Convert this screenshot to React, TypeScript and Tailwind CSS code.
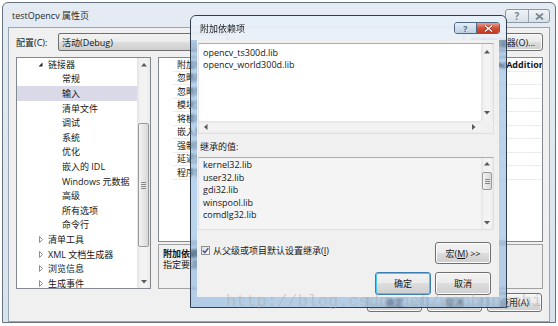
import React from "react";

const btn =
  "flex items-center justify-center rounded-[3px] border border-[#707070] bg-[linear-gradient(#f2f2f2_0%,#ebebeb_50%,#dddddd_50%,#cfcfcf_100%)] shadow-[inset_0_0_0_1px_#fbfbfb]";

function Arrow({ dir }: { dir: "up" | "down" | "left" | "right" }) {
  const d =
    dir === "up"
      ? "M0 3.5 L3 0 L6 3.5 Z"
      : dir === "down"
      ? "M0 0 L6 0 L3 3.5 Z"
      : dir === "left"
      ? "M3.5 0 L3.5 6 L0 3 Z"
      : "M0 0 L0 6 L3.5 3 Z";
  const vert = dir === "up" || dir === "down";
  return (
    <svg width={vert ? 6 : 4} height={vert ? 4 : 6} viewBox={vert ? "0 0 6 4" : "0 0 4 6"}>
      <path d={d} fill="#5a5a5a" />
    </svg>
  );
}

const tree = [
  { t: "链接器", l: 1, exp: true },
  { t: "常规", l: 2 },
  { t: "输入", l: 2, sel: true },
  { t: "清单文件", l: 2 },
  { t: "调试", l: 2 },
  { t: "系统", l: 2 },
  { t: "优化", l: 2 },
  { t: "嵌入的 IDL", l: 2 },
  { t: "Windows 元数据", l: 2 },
  { t: "高级", l: 2 },
  { t: "所有选项", l: 2 },
  { t: "命令行", l: 2 },
  { t: "清单工具", l: 1, exp: false },
  { t: "XML 文档生成器", l: 1, exp: false },
  { t: "浏览信息", l: 1, exp: false },
  { t: "生成事件", l: 1, exp: false },
];

const props = [
  "附加依赖项",
  "忽略所有默认库",
  "忽略特定默认库",
  "模块定义文件",
  "将模块添加到程序集",
  "嵌入托管资源文件",
  "强制符号引用",
  "延迟加载的 DLL",
  "程序集链接资源",
];

const inherited = ["kernel32.lib", "user32.lib", "gdi32.lib", "winspool.lib", "comdlg32.lib"];

export default function App() {
  return (
    <div className="relative h-[326px] w-[558px] overflow-hidden bg-white font-['Open_Sans','Noto_Sans_CJK_SC',sans-serif] text-[9px] leading-none text-[#161616]">
      <div className="pl-[2px] pt-[2px]">
        {/* Outer window */}
        <div className="relative flex h-[321px] w-[554px] flex-col rounded-t-[6px] border border-[#66727e] bg-[linear-gradient(#e4ebf2,#d9e3ed)]">
          <div className="flex h-[24px] items-center pl-[9px] text-[#2a2a2a]">testOpencv 属性页</div>
          {/* caption buttons (inactive) */}
          <div className="absolute right-[5px] top-[6px] flex h-[14px] overflow-hidden rounded-[3px] border border-[#8a97a6] bg-[linear-gradient(#f1f4f7,#d8e0e8)]">
            <div className="flex w-[23px] items-center justify-center border-r border-[#9aa6b3] text-[10px] font-bold text-[#7b8794]">?</div>
            <div className="flex w-[20px] items-center justify-center">
              <svg width="9" height="7" viewBox="0 0 9 7">
                <path d="M1 0.5 L8 6.5 M8 0.5 L1 6.5" stroke="#7b8794" strokeWidth="1.8" />
              </svg>
            </div>
          </div>

          {/* client */}
          <div className="mx-[5px] flex flex-1 flex-col border border-[#98a6b4] bg-[#f0f0f0]">
            {/* config row */}
            <div className="mt-[5px] flex h-[18px] items-center pl-[7px] pr-[6px]">
              <div className="w-[42px]">配置(C):</div>
              <div className="flex h-[18px] w-[170px] items-center rounded-[2px] border border-[#707070] bg-[linear-gradient(#f2f2f2_0%,#ebebeb_50%,#dddddd_50%,#cfcfcf_100%)] pl-[3px]">
                活动(Debug)
              </div>
              <div className={`${btn} ml-auto h-[18px] w-[80px]`}>配置管理器(O)...</div>
            </div>

            {/* main */}
            <div className="mt-[6px] flex h-[232px] gap-[7px] pl-[7px] pr-[6px]">
              {/* tree */}
              <div className="flex h-full w-[135px] shrink-0 border border-[#828790] bg-white">
                <div className="min-w-0 flex-1 overflow-hidden">
                  <div className="mt-[-1px]">
                    {tree.map((r, i) => (
                      <div
                        key={i}
                        className={`flex h-[14.6px] items-center whitespace-nowrap ${r.sel ? "bg-[#d9d9e7]" : ""} ${
                          r.l === 1 ? "pl-[21px]" : "pl-[45px]"
                        }`}
                      >
                        {r.l === 1 && (
                          <span className="mr-[5px] flex w-[5px] items-center justify-center">
                            {r.exp ? (
                              <svg width="5" height="5" viewBox="0 0 5 5">
                                <path d="M4.5 0.5 L4.5 4.5 L0.5 4.5 Z" fill="#262626" />
                              </svg>
                            ) : (
                              <svg width="4" height="7" viewBox="0 0 4 7">
                                <path d="M0.5 0.5 L3.5 3.5 L0.5 6.5 Z" fill="none" stroke="#808080" strokeWidth="0.9" />
                              </svg>
                            )}
                          </span>
                        )}
                        <span>{r.t}</span>
                      </div>
                    ))}
                  </div>
                </div>
                {/* scrollbar */}
                <div className="flex w-[13px] shrink-0 flex-col bg-[linear-gradient(90deg,#e3e3e3,#f2f2f2_25%,#f2f2f2_75%,#e8e8e8)]">
                  <div className="flex h-[13px] items-center justify-center">
                    <Arrow dir="up" />
                  </div>
                  <div className="flex-1">
                    <div className="mx-[1px] mt-[52px] flex h-[124px] items-center justify-center rounded-[2px] border border-[#9a9a9a] bg-[linear-gradient(90deg,#f4f4f4,#e6e6e6_50%,#d8d8d8)]">
                      <div className="flex flex-col gap-[1px]">
                        <div className="h-[1px] w-[5px] bg-[#8a8a8a]" />
                        <div className="h-[1px] w-[5px] bg-[#8a8a8a]" />
                        <div className="h-[1px] w-[5px] bg-[#8a8a8a]" />
                        <div className="h-[1px] w-[5px] bg-[#8a8a8a]" />
                      </div>
                    </div>
                  </div>
                  <div className="flex h-[13px] items-center justify-center">
                    <Arrow dir="down" />
                  </div>
                </div>
              </div>

              {/* right */}
              <div className="flex min-w-0 flex-1 flex-col gap-[2px]">
                <div className="h-[186px] overflow-hidden border border-[#828790] bg-white">
                  {props.map((p, i) => (
                    <div key={i} className="ml-[14px] flex h-[13.5px] items-center whitespace-nowrap border-b border-[#ececec]">
                      <div className="w-[322px] shrink-0 overflow-hidden pl-[4px]">{p}</div>
                      <div className="min-w-0 flex-1 overflow-hidden font-bold">
                        {i === 0 ? "%(AdditionalDependencies)" : ""}
                      </div>
                    </div>
                  ))}
                </div>
                <div className="h-[45px] overflow-hidden whitespace-nowrap border border-[#a0a0a0] bg-[#f0f0f0] pl-[4px] pt-[3px] leading-[11px]">
                  <div className="font-bold">附加依赖项</div>
                  <div>指定要添加到链接命令行的附加项。例如 kernel32.lib</div>
                </div>
              </div>
            </div>

            {/* bottom buttons */}
            <div className="mt-[4px] flex h-[19px] justify-end gap-[5px] pr-[7px]">
              <div className={`${btn} w-[55px]`}>确定</div>
              <div className={`${btn} w-[55px]`}>取消</div>
              <div className={`${btn} w-[55px]`}>应用(A)</div>
            </div>
          </div>
        </div>
      </div>

      {/* Modal dialog */}
      <div className="absolute left-[190px] top-[15px] flex h-[293px] w-[317px] flex-col rounded-t-[6px] border border-[#2f3d4c] bg-[rgba(120,170,220,0.5)] backdrop-blur-[1px]">
        <div className="relative flex h-[24px] items-center rounded-t-[5px] bg-[rgba(255,255,255,0.7)] pl-[9px] text-[#1a1a1a]">
          附加依赖项
          <div className="absolute right-[6px] top-[6px] flex h-[12px] overflow-hidden rounded-[3px] border border-[#4e6887]">
            <div className="flex w-[22px] items-center justify-center border-r border-[#4e6887] bg-[linear-gradient(#e6eef6,#bccfe2)] text-[9px] font-bold text-[#4f6a88]">
              ?
            </div>
            <div className="flex w-[22px] items-center justify-center bg-[linear-gradient(#eaa08e,#d2523a_50%,#c4391f)]">
              <svg width="9" height="7" viewBox="0 0 9 7">
                <path d="M1 0.5 L8 6.5 M8 0.5 L1 6.5" stroke="#7a2a1c" strokeWidth="2.6" />
                <path d="M1 0.5 L8 6.5 M8 0.5 L1 6.5" stroke="#ffffff" strokeWidth="1.4" />
              </svg>
            </div>
          </div>
        </div>
        <div className="mb-[10px] ml-[6px] mr-[7px] flex flex-1 flex-col bg-[#f0f0f0]">
          {/* top edit box */}
          <div className="ml-[1px] mt-[3px] flex h-[91px] w-[296px] flex-col border border-[#abadb3] border-b-[#dbdfe6] border-l-[#e2e3ea] border-r-[#dbdfe6] bg-white">
            <div className="flex flex-1">
              <div className="flex-1 pl-[4px] pt-[3px] leading-[11.7px]">
                <div>opencv_ts300d.lib</div>
                <div>opencv_world300d.lib</div>
              </div>
              <div className="flex w-[12px] flex-col justify-between bg-[linear-gradient(90deg,#e6e6e6,#f3f3f3_30%,#f3f3f3_70%,#ebebeb)] py-[6px]">
                <div className="flex justify-center">
                  <Arrow dir="up" />
                </div>
                <div className="flex justify-center">
                  <Arrow dir="down" />
                </div>
              </div>
            </div>
            <div className="flex h-[12px]">
              <div className="flex flex-1 items-center justify-between bg-[linear-gradient(#e6e6e6,#f3f3f3_30%,#f3f3f3_70%,#ebebeb)] px-[5px]">
                <Arrow dir="left" />
                <Arrow dir="right" />
              </div>
              <div className="w-[12px] bg-[#f0f0f0]" />
            </div>
          </div>

          <div className="mt-[7px] h-[12px] pl-[3px] leading-[12px]">继承的值:</div>

          {/* inherited list */}
          <div className="ml-[1px] mt-[4px] flex h-[73px] w-[296px] border border-[#abadb3] border-b-[#dbdfe6] border-l-[#e2e3ea] border-r-[#dbdfe6] bg-[#f4f4f4]">
            <div className="flex-1 overflow-hidden pl-[4px] pt-[1px] leading-[12.5px]">
              {inherited.map((x) => (
                <div key={x}>{x}</div>
              ))}
            </div>
            <div className="flex w-[12px] flex-col bg-[linear-gradient(90deg,#e6e6e6,#f3f3f3_30%,#f3f3f3_70%,#ebebeb)]">
              <div className="flex h-[12px] items-center justify-center">
                <Arrow dir="up" />
              </div>
              <div className="mx-[1px] mt-[2px] flex h-[18px] items-center justify-center rounded-[2px] border border-[#9a9a9a] bg-[linear-gradient(90deg,#f4f4f4,#e6e6e6_50%,#d8d8d8)]">
                <div className="flex flex-col gap-[1px]">
                  <div className="h-[1px] w-[5px] bg-[#8a8a8a]" />
                  <div className="h-[1px] w-[5px] bg-[#8a8a8a]" />
                  <div className="h-[1px] w-[5px] bg-[#8a8a8a]" />
                </div>
              </div>
              <div className="flex-1" />
              <div className="flex h-[12px] items-center justify-center">
                <Arrow dir="down" />
              </div>
            </div>
          </div>

          {/* checkbox + macro */}
          <div className="mt-[12px] flex h-[22px] items-start">
            <div className="ml-[4px] mt-[4px] flex h-[9px] w-[9px] items-center justify-center border border-[#8f8f8f] bg-[linear-gradient(135deg,#dcdcdc,#fdfdfd)]">
              <svg width="7" height="7" viewBox="0 0 7 7">
                <path d="M0.8 3.6 L2.8 5.6 L6.3 1.2" fill="none" stroke="#3d5487" strokeWidth="1.4" />
              </svg>
            </div>
            <div className="ml-[3px] mt-[3px] leading-[11px]">
              从父级或项目默认设置继承(<span className="underline">I</span>)
            </div>
            <div className={`${btn} ml-auto mr-[8px] h-[22px] w-[56px]`}>
              宏(<span className="underline">M</span>)&nbsp;&gt;&gt;
            </div>
          </div>

          {/* OK / Cancel */}
          <div className="mt-[8px] flex h-[23px] justify-end gap-[4px] pr-[8px]">
            <div className="flex w-[56px] items-center justify-center rounded-[3px] border border-[#3c7fb1] bg-[linear-gradient(#f2f2f2_0%,#ebebeb_50%,#dddddd_50%,#cfcfcf_100%)] shadow-[inset_0_0_0_1px_#48c8f5]">
              确定
            </div>
            <div className={`${btn} w-[56px]`}>取消</div>
          </div>
        </div>
      </div>

      {/* watermark */}
      <div className="pointer-events-none absolute left-[226px] top-[293px] whitespace-nowrap font-['Liberation_Mono',monospace] text-[17px] leading-[17px] text-[rgba(170,170,170,0.45)]">
        http://blog.csdn.net/wanhongshi
      </div>
    </div>
  );
}
